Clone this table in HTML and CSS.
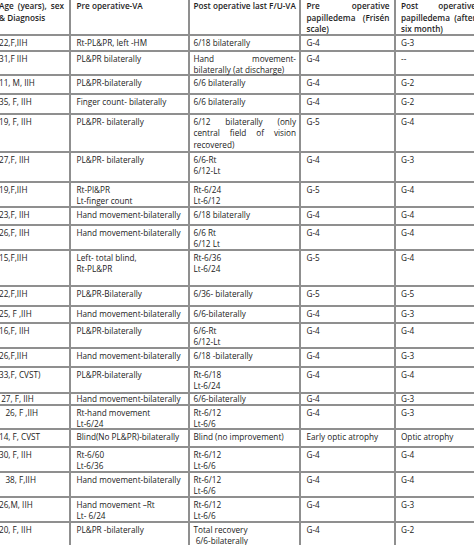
FILE: index.html
```html
<!DOCTYPE html>
<html>
<head>
<meta charset="utf-8">
<link rel="stylesheet" href="styles.css">
</head>
<body>
<div class="tbl">
  <div class="cell c1 hd">Age (years), sex &amp; Diagnosis</div>
  <div class="cell c2 hd">Pre operative-VA</div>
  <div class="cell c3 hd">Post operative last F/U-VA</div>
  <div class="cell c4 hd">Pre operative papilledema (Frisén scale)</div>
  <div class="cell c5 hd">Post operative papilledema (after six month)</div>

  <div class="cell c1">22,F,IIH</div><div class="cell c2">Rt-PL&amp;PR, left -HM</div><div class="cell c3">6/18 bilaterally</div><div class="cell c4">G-4</div><div class="cell c5">G-3</div>
  <div class="cell c1">31,F IIH</div><div class="cell c2">PL&amp;PR bilaterally</div><div class="cell c3">Hand movement- bilaterally (at discharge)</div><div class="cell c4">G-4</div><div class="cell c5">--</div>
  <div class="cell c1">11, M, IIH</div><div class="cell c2">PL&amp;PR-bilaterally</div><div class="cell c3">6/6 bilaterally</div><div class="cell c4">G-4</div><div class="cell c5">G-2</div>
  <div class="cell c1">35, F, IIH</div><div class="cell c2">Finger count- bilaterally</div><div class="cell c3">6/6 bilaterally</div><div class="cell c4">G-4</div><div class="cell c5">G-2</div>
  <div class="cell c1">19, F, IIH</div><div class="cell c2">PL&amp;PR- bilaterally</div><div class="cell c3">6/12 bilaterally (only central field of vision recovered)</div><div class="cell c4">G-5</div><div class="cell c5">G-4</div>
  <div class="cell c1">27,F, IIH</div><div class="cell c2">PL&amp;PR- bilaterally</div><div class="cell c3">6/6-Rt<br>6/12-Lt</div><div class="cell c4">G-4</div><div class="cell c5">G-3</div>
  <div class="cell c1">19,F,IIH</div><div class="cell c2">Rt-Pl&amp;PR<br>Lt-finger count</div><div class="cell c3">Rt-6/24<br>Lt-6/12</div><div class="cell c4">G-5</div><div class="cell c5">G-4</div>
  <div class="cell c1">23,F, IIH</div><div class="cell c2">Hand movement-bilaterally</div><div class="cell c3">6/18 bilaterally</div><div class="cell c4">G-4</div><div class="cell c5">G-4</div>
  <div class="cell c1">26,F, IIH</div><div class="cell c2">Hand movement-bilaterally</div><div class="cell c3">6/6 Rt<br>6/12 Lt</div><div class="cell c4">G-4</div><div class="cell c5">G-4</div>
  <div class="cell c1">15,F,IIH</div><div class="cell c2">Left- total blind,<br>Rt-PL&amp;PR</div><div class="cell c3">Rt-6/36<br>Lt-6/24</div><div class="cell c4">G-5</div><div class="cell c5">G-4</div>
  <div class="cell c1">22,F,IIH</div><div class="cell c2">PL&amp;PR-Bilaterally</div><div class="cell c3">6/36- bilaterally</div><div class="cell c4">G-5</div><div class="cell c5">G-5</div>
  <div class="cell c1">25, F ,IIH</div><div class="cell c2">Hand movement-bilaterally</div><div class="cell c3">6/6-bilaterally</div><div class="cell c4">G-4</div><div class="cell c5">G-3</div>
  <div class="cell c1">16,F, IIH</div><div class="cell c2">PL&amp;PR-bilaterally</div><div class="cell c3">6/6-Rt<br>6/12-Lt</div><div class="cell c4">G-4</div><div class="cell c5">G-4</div>
  <div class="cell c1">26,F,IIH</div><div class="cell c2">Hand movement-bilaterally</div><div class="cell c3">6/18 -bilaterally</div><div class="cell c4">G-4</div><div class="cell c5">G-3</div>
  <div class="cell c1">33,F, CVST)</div><div class="cell c2">PL&amp;PR-bilaterally</div><div class="cell c3">Rt-6/18<br>Lt-6/24</div><div class="cell c4">G-4</div><div class="cell c5">G-4</div>
  <div class="cell c1 tight">&nbsp;27, F, IIH</div><div class="cell c2 tight">Hand movement-bilaterally</div><div class="cell c3 tight">6/6-bilaterally</div><div class="cell c4 tight">G-4</div><div class="cell c5 tight">G-3</div>
  <div class="cell c1">&nbsp;&nbsp;&nbsp;26, F ,IIH</div><div class="cell c2">Rt-hand movement<br>Lt-6/24</div><div class="cell c3">Rt-6/12<br>Lt-6/6</div><div class="cell c4">G-4</div><div class="cell c5">G-3</div>
  <div class="cell c1">14, F, CVST</div><div class="cell c2">Blind(No PL&amp;PR)-bilaterally</div><div class="cell c3">Blind (no improvement)</div><div class="cell c4">Early optic atrophy</div><div class="cell c5">Optic atrophy</div>
  <div class="cell c1">30, F, IIH</div><div class="cell c2">Rt-6/60<br>Lt-6/36</div><div class="cell c3">Rt-6/12<br>Lt-6/6</div><div class="cell c4">G-4</div><div class="cell c5">G-4</div>
  <div class="cell c1">&nbsp;&nbsp;&nbsp;38, F,IIH</div><div class="cell c2">Hand movement-bilaterally</div><div class="cell c3">Rt-6/12<br>Lt-6/6</div><div class="cell c4">G-4</div><div class="cell c5">G-4</div>
  <div class="cell c1">26,M, IIH</div><div class="cell c2">Hand movement –Rt<br>Lt- 6/24</div><div class="cell c3">Rt-6/12<br>Lt-6/6</div><div class="cell c4">G-4</div><div class="cell c5">G-3</div>
  <div class="cell c1">20, F, IIH</div><div class="cell c2">PL&amp;PR -bilaterally</div><div class="cell c3">Total recovery<br>&nbsp;6/6-bilaterally</div><div class="cell c4">G-4</div><div class="cell c5">G-2</div>
</div>
</body>
</html>
```
FILE: styles.css
```css
html, body {
  margin: 0;
  padding: 0;
  background: #ffffff;
  overflow: hidden;
}

body {
  width: 474px;
  height: 545px;
}

.tbl {
  display: grid;
  grid-template-columns: 75px 117px 109px 93px 84px;
  grid-template-rows: 34px 14px 22px 17px 18px 36px 28px 23px 16px 23px 34px 18px 15px 23px 17px 24px 10px 22px 16px 23px 23px 23px 30px;
  gap: 2px;
  background: #8f8f8f;
  margin-left: -6px;
  width: 486px;
  font-family: "Open Sans", "Noto Sans", sans-serif;
  font-size: 8.2px;
  line-height: 11.6px;
  color: #222222;
}

.cell {
  background: #ffffff;
  padding: 0.5px 5px 0 5px;
  text-align: justify;
  white-space: normal;
  overflow: visible;
}

.hd {
  font-weight: 600;
  color: #1e1e1e;
  padding-top: 0;
}

.tight {
  padding-top: 0;
  line-height: 10px;
}

.c1 {
  padding-left: 5px;
  padding-right: 5px;
}

.c2 {
  padding-left: 5.5px;
}

.c3 {
  padding-left: 3.5px;
  padding-right: 3px;
}

.c4 {
  padding-left: 5.5px;
  padding-right: 4.5px;
}

.c5 {
  padding-left: 5px;
  padding-right: 4px;
}
```
